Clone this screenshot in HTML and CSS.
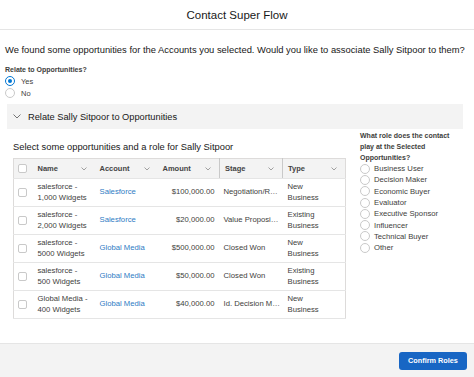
FILE: index.html
```html
<!DOCTYPE html>
<html lang="en">
<head>
  <meta charset="UTF-8">
  <meta name="viewport" content="width=device-width, initial-scale=1.0">
  <title>Contact Super Flow</title>
  <link rel="stylesheet" href="styles.css">
</head>
<body>
  <div class="modal">
    <header class="modal-header">
      <h1>Contact Super Flow</h1>
    </header>

    <main class="modal-body">
      <p class="intro">We found some opportunities for the Accounts you selected. Would you like to associate Sally Sitpoor to them?</p>

      <div class="field">
        <div class="field-label">Relate to Opportunities?</div>
        <label class="radio"><span class="radio-dot checked"></span>Yes</label>
        <label class="radio"><span class="radio-dot"></span>No</label>
      </div>

      <section class="accordion">
        <div class="accordion-title">
          <svg class="chevron" width="8" height="5" viewBox="0 0 8 5"><path d="M0.5 0.5 L4 4 L7.5 0.5" fill="none" stroke="#747474" stroke-width="1"/></svg>
          Relate Sally Sitpoor to Opportunities
        </div>

        <div class="accordion-content">
          <div class="opps">
            <p class="opps-label">Select some opportunities and a role for Sally Sitpoor</p>
            <table class="opp-table">
              <colgroup>
                <col class="col-check">
                <col class="col-name">
                <col class="col-account">
                <col class="col-amount">
                <col class="col-stage">
                <col class="col-type">
              </colgroup>
              <thead>
                <tr>
                  <th><span class="checkbox"></span></th>
                  <th><div class="th-inner">Name <svg width="6" height="4" viewBox="0 0 6 4"><path d="M0.5 0.5 L3 3 L5.5 0.5" fill="none" stroke="#8a8a8a" stroke-width="0.8"/></svg></div></th>
                  <th><div class="th-inner">Account <svg width="6" height="4" viewBox="0 0 6 4"><path d="M0.5 0.5 L3 3 L5.5 0.5" fill="none" stroke="#8a8a8a" stroke-width="0.8"/></svg></div></th>
                  <th><div class="th-inner">Amount <svg width="6" height="4" viewBox="0 0 6 4"><path d="M0.5 0.5 L3 3 L5.5 0.5" fill="none" stroke="#8a8a8a" stroke-width="0.8"/></svg></div></th>
                  <th class="sep"><div class="th-inner">Stage <svg width="6" height="4" viewBox="0 0 6 4"><path d="M0.5 0.5 L3 3 L5.5 0.5" fill="none" stroke="#8a8a8a" stroke-width="0.8"/></svg></div></th>
                  <th class="sep"><div class="th-inner">Type <svg width="6" height="4" viewBox="0 0 6 4"><path d="M0.5 0.5 L3 3 L5.5 0.5" fill="none" stroke="#8a8a8a" stroke-width="0.8"/></svg></div></th>
                </tr>
              </thead>
              <tbody>
                <tr>
                  <td><span class="checkbox"></span></td>
                  <td>salesforce - 1,000 Widgets</td>
                  <td><a href="#">Salesforce</a></td>
                  <td class="amount">$100,000.00</td>
                  <td class="stage">Negotiation/Review</td>
                  <td>New<br>Business</td>
                </tr>
                <tr>
                  <td><span class="checkbox"></span></td>
                  <td>salesforce - 2,000 Widgets</td>
                  <td><a href="#">Salesforce</a></td>
                  <td class="amount">$20,000.00</td>
                  <td class="stage">Value Proposition</td>
                  <td>Existing<br>Business</td>
                </tr>
                <tr>
                  <td><span class="checkbox"></span></td>
                  <td>salesforce - 5000 Widgets</td>
                  <td><a href="#">Global Media</a></td>
                  <td class="amount">$500,000.00</td>
                  <td class="stage">Closed Won</td>
                  <td>New<br>Business</td>
                </tr>
                <tr>
                  <td><span class="checkbox"></span></td>
                  <td>salesforce - 500 Widgets</td>
                  <td><a href="#">Global Media</a></td>
                  <td class="amount">$50,000.00</td>
                  <td class="stage">Closed Won</td>
                  <td>Existing<br>Business</td>
                </tr>
                <tr>
                  <td><span class="checkbox"></span></td>
                  <td>Global Media - 400 Widgets</td>
                  <td><a href="#">Global Media</a></td>
                  <td class="amount">$40,000.00</td>
                  <td class="stage">Id. Decision Makers</td>
                  <td>New<br>Business</td>
                </tr>
              </tbody>
            </table>
          </div>

          <div class="roles">
            <div class="field-label roles-label">What role does the contact play at the Selected Opportunities?</div>
            <label class="radio role"><span class="radio-dot"></span>Business User</label>
            <label class="radio role"><span class="radio-dot"></span>Decision Maker</label>
            <label class="radio role"><span class="radio-dot"></span>Economic Buyer</label>
            <label class="radio role"><span class="radio-dot"></span>Evaluator</label>
            <label class="radio role"><span class="radio-dot"></span>Executive Sponsor</label>
            <label class="radio role"><span class="radio-dot"></span>Influencer</label>
            <label class="radio role"><span class="radio-dot"></span>Technical Buyer</label>
            <label class="radio role"><span class="radio-dot"></span>Other</label>
          </div>
        </div>
      </section>
    </main>

    <footer class="modal-footer">
      <button class="btn-brand">Confirm Roles</button>
    </footer>
  </div>
</body>
</html>
```

FILE: styles.css
```css
body {
  margin: 0;
  font-family: 'Liberation Sans', Arial, sans-serif;
  color: #181818;
  background: #fff;
}

.modal {
  display: flex;
  flex-direction: column;
  height: 100vh;
}

.modal-header {
  height: 30px;
  box-sizing: border-box;
  border-bottom: 1px solid #e5e5e5;
  display: flex;
  align-items: center;
  justify-content: center;
}

.modal-header h1 {
  margin: 0;
  font-size: 11.5px;
  font-weight: normal;
}

.modal-body {
  flex: 1;
  padding: 0 5px;
}

.intro {
  margin: 14px 0 0;
  font-size: 9.4px;
  line-height: 12px;
  white-space: nowrap;
}

.field-label {
  margin-top: 9px;
  font-size: 7px;
  font-weight: bold;
  line-height: 10px;
  color: #3e3e3c;
}

.radio {
  display: flex;
  align-items: center;
  gap: 6px;
  height: 12px;
  font-size: 7.5px;
  color: #3e3e3c;
}

.radio-dot {
  width: 10px;
  height: 10px;
  box-sizing: border-box;
  border: 1px solid #c9c9c9;
  border-radius: 50%;
  background: #fff;
  display: flex;
  align-items: center;
  justify-content: center;
}

.radio-dot.checked {
  border-color: #0176d3;
}

.radio-dot.checked::after {
  content: '';
  width: 4px;
  height: 4px;
  border-radius: 50%;
  background: #0176d3;
}

.accordion {
  margin: 5px 6px 0 2px;
}

.accordion-title {
  height: 25px;
  background: #f3f3f3;
  display: flex;
  align-items: center;
  padding-left: 6px;
  font-size: 9.25px;
}

.chevron {
  margin-right: 7px;
}

.accordion-content {
  display: flex;
  padding-left: 6px;
}

.opps {
  width: 332px;
}

.opps-label {
  margin: 12px 0 5px;
  font-size: 9.35px;
  line-height: 12px;
}

.opp-table {
  width: 332px;
  table-layout: fixed;
  border-collapse: collapse;
  border: 1px solid #dddbda;
  font-size: 7.7px;
  color: #3e3e3c;
}

.col-check { width: 19px; }
.col-name { width: 62px; }
.col-account { width: 63px; }
.col-amount { width: 62px; }
.col-stage { width: 63px; }
.col-type { width: 63px; }

.opp-table th {
  height: 19px;
  padding: 0 5px;
  background: #f3f3f3;
  border-bottom: 1px solid #e5e5e5;
  font-weight: bold;
  font-size: 7.5px;
  color: #444;
  text-align: left;
}

.opp-table th.sep {
  border-left: 1px solid #c9c9c9;
}

.th-inner {
  display: flex;
  align-items: center;
  justify-content: space-between;
  padding-right: 3px;
}

.opp-table td {
  height: 27px;
  padding: 0 5px;
  line-height: 10.5px;
  border-bottom: 1px solid #e5e5e5;
  vertical-align: middle;
}

.opp-table th:first-child,
.opp-table td:first-child {
  padding: 0 0 0 4px;
}

.checkbox {
  display: block;
  width: 9px;
  height: 9px;
  box-sizing: border-box;
  border: 1px solid #c9c9c9;
  border-radius: 2px;
  background: #fff;
}

.opp-table a {
  color: #2e7bc4;
  text-decoration: none;
}

.amount {
  text-align: right;
}

.opp-table td.stage {
  padding: 0 2px 0 4px;
  white-space: nowrap;
  overflow: hidden;
  text-overflow: ellipsis;
}

.roles {
  margin-left: 15px;
  width: 100px;
}

.roles-label {
  margin-top: 1px;
  line-height: 11px;
}

.radio.role {
  height: 11.3px;
  gap: 4px;
  font-size: 7.7px;
}

.modal-footer {
  height: 34px;
  box-sizing: border-box;
  border-top: 1px solid #e5e5e5;
  background: #f3f3f3;
  display: flex;
  align-items: center;
  justify-content: flex-end;
  padding-right: 7px;
}

.btn-brand {
  width: 68px;
  height: 18px;
  border: none;
  border-radius: 3px;
  background: #1866c4;
  color: #fff;
  font-family: inherit;
  font-size: 7.3px;
  font-weight: bold;
  padding: 0;
}
```
